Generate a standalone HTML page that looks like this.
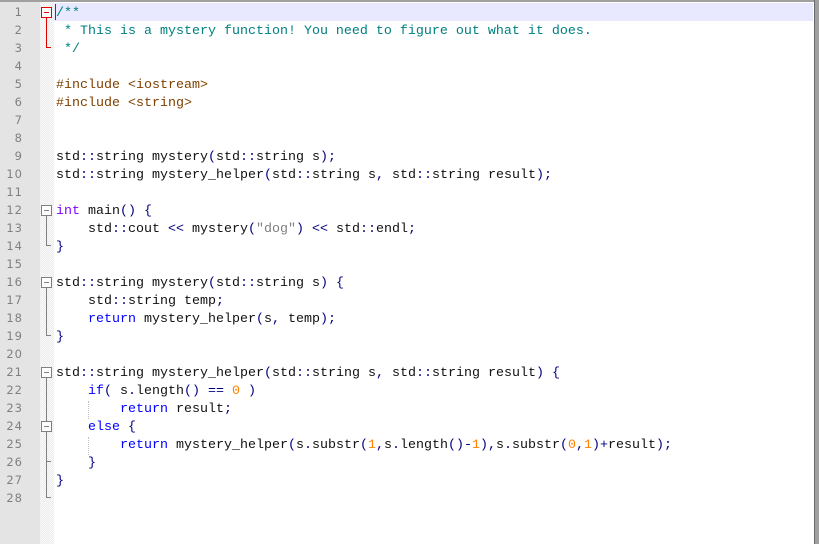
<!DOCTYPE html>
<html><head><style>
body{margin:0;width:819px;height:544px;overflow:hidden;background:#fff;position:relative;font-family:"Liberation Mono",monospace;}
.top{position:absolute;left:0;top:0;width:819px;height:2px;background:#a0a0a0}
.rb{position:absolute;right:0;top:0;width:4px;height:544px;background:#a0a0a0;border-left:1px solid #6a6a6a}
.ln{position:absolute;left:0;top:2px;width:40px;height:542px;background:#e4e4e4}
.fm{position:absolute;left:40px;top:2px;width:14px;height:542px;background-color:#f6f6f6;background-image:repeating-conic-gradient(#ececec 0 25%,#fafafa 0 50%);background-size:2px 2px}
.hl{position:absolute;left:54px;top:3px;width:759px;height:18px;background:#e8e8ff}
.caret{position:absolute;left:55px;top:4px;width:1px;height:16px;background:#8000ff}
.n{position:absolute;left:0;width:23px;text-align:right;font-family:"DejaVu Sans",sans-serif;font-size:11.5px;letter-spacing:1px;color:#808080;line-height:18px;margin-top:0px}
.c{position:absolute;left:56px;font-size:13.33px;line-height:18px;white-space:pre;color:#111;margin-top:2px}
.cm{color:#008080}.pp{color:#804000}.kw{color:#0000ff}.ty{color:#8000ff}
.o{color:#000080}.nu{color:#ff8000}.st{color:#808080}
.box{position:absolute;left:41px;width:9px;height:9px;border:1px solid #808080;background:#fff}
.box::after{content:"";position:absolute;left:2px;top:4px;width:5px;height:1px;background:#808080}
.box.r{border-color:#e00000}.box.r::after{background:#e00000}
.vl{position:absolute;left:46px;width:1px;background:#808080}
.tk{position:absolute;left:46px;width:5px;height:1px;background:#808080}
.red{background:#e00000}
.dot{position:absolute;width:1px;border-left:1px dotted #c0c0c0}
</style></head><body>
<div class="top"></div>
<div class="ln"></div><div class="fm"></div>
<div class="hl"></div>
<div class="rb"></div>

<div class="n" style="top:3px">1</div><div class="n" style="top:21px">2</div><div class="n" style="top:39px">3</div><div class="n" style="top:57px">4</div><div class="n" style="top:75px">5</div><div class="n" style="top:93px">6</div><div class="n" style="top:111px">7</div><div class="n" style="top:129px">8</div><div class="n" style="top:147px">9</div><div class="n" style="top:165px">10</div><div class="n" style="top:183px">11</div><div class="n" style="top:201px">12</div><div class="n" style="top:219px">13</div><div class="n" style="top:237px">14</div><div class="n" style="top:255px">15</div><div class="n" style="top:273px">16</div><div class="n" style="top:291px">17</div><div class="n" style="top:309px">18</div><div class="n" style="top:327px">19</div><div class="n" style="top:345px">20</div><div class="n" style="top:363px">21</div><div class="n" style="top:381px">22</div><div class="n" style="top:399px">23</div><div class="n" style="top:417px">24</div><div class="n" style="top:435px">25</div><div class="n" style="top:453px">26</div><div class="n" style="top:471px">27</div><div class="n" style="top:489px">28</div>

<div class="box r" style="top:7px"></div><div class="vl red" style="top:18px;height:30px"></div><div class="tk red" style="top:47px"></div>
<div class="box" style="top:205px"></div><div class="vl" style="top:216px;height:30px"></div><div class="tk" style="top:245px"></div>
<div class="box" style="top:277px"></div><div class="vl" style="top:288px;height:48px"></div><div class="tk" style="top:335px"></div>
<div class="box" style="top:367px"></div><div class="vl" style="top:378px;height:120px"></div><div class="tk" style="top:497px"></div>
<div class="box" style="top:421px"></div><div class="tk" style="top:461px"></div>
<div class="dot" style="left:88px;top:401px;height:18px"></div>
<div class="dot" style="left:88px;top:437px;height:18px"></div>

<div class="caret"></div>
<div class="c cm" style="top:3px">/**</div>
<div class="c cm" style="top:21px"> * This is a mystery function! You need to figure out what it does.</div>
<div class="c cm" style="top:39px"> */</div>
<div class="c pp" style="top:75px">#include &lt;iostream&gt;</div>
<div class="c pp" style="top:93px">#include &lt;string&gt;</div>
<div class="c" style="top:147px">std<span class="o">::</span>string mystery<span class="o">(</span>std<span class="o">::</span>string s<span class="o">);</span></div>
<div class="c" style="top:165px">std<span class="o">::</span>string mystery_helper<span class="o">(</span>std<span class="o">::</span>string s<span class="o">,</span> std<span class="o">::</span>string result<span class="o">);</span></div>
<div class="c" style="top:201px"><span class="ty">int</span> main<span class="o">()</span> <span class="o">{</span></div>
<div class="c" style="top:219px">    std<span class="o">::</span>cout <span class="o">&lt;&lt;</span> mystery<span class="o">(</span><span class="st">"dog"</span><span class="o">)</span> <span class="o">&lt;&lt;</span> std<span class="o">::</span>endl<span class="o">;</span></div>
<div class="c" style="top:237px"><span class="o">}</span></div>
<div class="c" style="top:273px">std<span class="o">::</span>string mystery<span class="o">(</span>std<span class="o">::</span>string s<span class="o">)</span> <span class="o">{</span></div>
<div class="c" style="top:291px">    std<span class="o">::</span>string temp<span class="o">;</span></div>
<div class="c" style="top:309px">    <span class="kw">return</span> mystery_helper<span class="o">(</span>s<span class="o">,</span> temp<span class="o">);</span></div>
<div class="c" style="top:327px"><span class="o">}</span></div>
<div class="c" style="top:363px">std<span class="o">::</span>string mystery_helper<span class="o">(</span>std<span class="o">::</span>string s<span class="o">,</span> std<span class="o">::</span>string result<span class="o">)</span> <span class="o">{</span></div>
<div class="c" style="top:381px">    <span class="kw">if</span><span class="o">(</span> s<span class="o">.</span>length<span class="o">()</span> <span class="o">==</span> <span class="nu">0</span> <span class="o">)</span></div>
<div class="c" style="top:399px">        <span class="kw">return</span> result<span class="o">;</span></div>
<div class="c" style="top:417px">    <span class="kw">else</span> <span class="o">{</span></div>
<div class="c" style="top:435px">        <span class="kw">return</span> mystery_helper<span class="o">(</span>s<span class="o">.</span>substr<span class="o">(</span><span class="nu">1</span><span class="o">,</span>s<span class="o">.</span>length<span class="o">()-</span><span class="nu">1</span><span class="o">),</span>s<span class="o">.</span>substr<span class="o">(</span><span class="nu">0</span><span class="o">,</span><span class="nu">1</span><span class="o">)+</span>result<span class="o">);</span></div>
<div class="c" style="top:453px">    <span class="o">}</span></div>
<div class="c" style="top:471px"><span class="o">}</span></div>
</body></html>
